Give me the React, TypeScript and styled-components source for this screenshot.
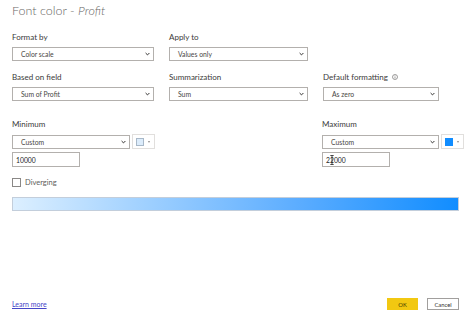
import React from "react";
import styled, { createGlobalStyle } from "styled-components";

const Global = createGlobalStyle`
  html, body { margin: 0; padding: 0; background: #fff; }
  body { font-family: Lato, "Open Sans", sans-serif; color: #252423; }
  * { box-sizing: border-box; }
`;

const Dialog = styled.div`
  width: 474px;
  height: 321px;
  display: flex;
  flex-direction: column;
  padding: 0 12px 11px 12px;
`;

const Title = styled.div`
  margin-top: 3px;
  height: 16px;
  line-height: 16px;
  font-size: 12.5px;
  font-weight: 300;
  color: #6b6967;
  em { font-style: italic; }
`;

const FieldGrid = styled.div`
  margin-top: 13px;
  display: grid;
  grid-template-columns: 142px 139px 116px;
  column-gap: 15px;
  row-gap: 11px;
`;

const Field = styled.div`
  display: flex;
  flex-direction: column;
`;

const Label = styled.div`
  height: 10px;
  line-height: 10px;
  font-size: 8px;
  color: #3b3a39;
  margin-bottom: 5px;
  display: flex;
  align-items: center;
  gap: 4px;
`;

const SelectBox = styled.div<{ $w?: number }>`
  width: ${(p) => (p.$w ? `${p.$w}px` : "100%")};
  height: 14px;
  border: 1px solid #b3b0ad;
  background: #fff;
  display: flex;
  align-items: center;
  justify-content: space-between;
  padding: 0 3px 0 8px;
  font-size: 6.8px;
  color: #484644;
`;

const Chevron = () => (
  <svg width="5" height="4" viewBox="0 0 5 4">
    <path d="M0.6 1 L2.5 2.9 L4.4 1" fill="none" stroke="#323130" strokeWidth="1" />
  </svg>
);

const Select = ({ value, w }: { value: string; w?: number }) => (
  <SelectBox $w={w}>
    <span>{value}</span>
    <Chevron />
  </SelectBox>
);

const InfoIcon = () => (
  <svg width="6" height="6" viewBox="0 0 12 12">
    <circle cx="6" cy="6" r="5" fill="none" stroke="#605e5c" strokeWidth="1.2" />
    <rect x="5.4" y="5" width="1.2" height="4" fill="#605e5c" />
    <rect x="5.4" y="3" width="1.2" height="1.2" fill="#605e5c" />
  </svg>
);

const RangeRow = styled.div`
  margin-top: 18px;
  display: grid;
  grid-template-columns: 310px 142px;
`;

const Control = styled.div`
  display: flex;
  align-items: center;
  gap: 2px;
`;

const SwatchButton = styled.div`
  width: 23px;
  height: 15px;
  border: 1px solid #e1dfdd;
  background: #fff;
  display: flex;
  align-items: center;
  padding-left: 3px;
  gap: 4px;
`;

const Swatch = styled.div<{ $color: string; $border: string }>`
  width: 8px;
  height: 8px;
  background: ${(p) => p.$color};
  border: 1px solid ${(p) => p.$border};
`;

const Caret = styled.span`
  width: 0;
  height: 0;
  border-left: 1.5px solid transparent;
  border-right: 1.5px solid transparent;
  border-top: 2px solid #8a8886;
`;

const InputWrap = styled.div`
  position: relative;
  margin-top: 3px;
  width: 68px;
`;

const TextInput = styled.div`
  width: 68px;
  height: 15px;
  border: 1px solid #b3b0ad;
  padding-left: 3px;
  display: flex;
  align-items: center;
  font-size: 6.8px;
  color: #252423;
`;

const Cursor = styled.svg`
  position: absolute;
  left: 7.5px;
  top: 3px;
`;

const CheckRow = styled.div`
  margin-top: 11px;
  display: flex;
  align-items: center;
  gap: 4px;
  height: 9px;
  font-size: 7.5px;
  color: #605e5c;
`;

const CheckBox = styled.div`
  width: 9px;
  height: 9px;
  border: 1px solid #8a8886;
  background: #fff;
`;

const GradientBar = styled.div`
  margin-top: 10px;
  width: 447px;
  height: 14px;
  border: 1px solid #c3cedb;
  background: linear-gradient(90deg, #dcefff 0%, #9fd0ff 30%, #5aacff 65%, #118dff 100%);
`;

const Footer = styled.div`
  margin-top: auto;
  display: flex;
  align-items: center;
  justify-content: space-between;
  width: 447px;
`;

const Link = styled.a`
  font-size: 7px;
  color: #4646c8;
  text-decoration: underline;
  line-height: 9px;
`;

const Buttons = styled.div`
  display: flex;
  gap: 9px;
`;

const Button = styled.div<{ $primary?: boolean }>`
  width: ${(p) => (p.$primary ? 31 : 32)}px;
  height: 12px;
  display: flex;
  align-items: center;
  justify-content: center;
  font-size: 5.8px;
  color: ${(p) => (p.$primary ? "#4a4000" : "#323130")};
  background: ${(p) => (p.$primary ? "#f2c811" : "#fff")};
  border: 1px solid ${(p) => (p.$primary ? "#f2c811" : "#a19f9d")};
`;

export default function App() {
  return (
    <>
      <Global />
      <Dialog>
        <Title>
          Font color - <em>Profit</em>
        </Title>
        <FieldGrid>
          <Field>
            <Label>Format by</Label>
            <Select value="Color scale" />
          </Field>
          <Field>
            <Label>Apply to</Label>
            <Select value="Values only" />
          </Field>
          <div />
          <Field>
            <Label>Based on field</Label>
            <Select value="Sum of Profit" />
          </Field>
          <Field>
            <Label>Summarization</Label>
            <Select value="Sum" />
          </Field>
          <Field>
            <Label>
              Default formatting <InfoIcon />
            </Label>
            <Select value="As zero" />
          </Field>
        </FieldGrid>
        <RangeRow>
          <Field>
            <Label>Minimum</Label>
            <Control>
              <Select value="Custom" w={118} />
              <SwatchButton>
                <Swatch $color="#dcecfb" $border="#a8b8c8" />
                <Caret />
              </SwatchButton>
            </Control>
            <InputWrap>
              <TextInput>10000</TextInput>
            </InputWrap>
          </Field>
          <Field>
            <Label>Maximum</Label>
            <Control>
              <Select value="Custom" w={117} />
              <SwatchButton>
                <Swatch $color="#118dff" $border="#118dff" />
                <Caret />
              </SwatchButton>
            </Control>
            <InputWrap>
              <TextInput>22000</TextInput>
              <Cursor width="4" height="10" viewBox="0 0 4 10">
                <path d="M0.3 0.5 H3.7 M2 0.5 V9.5 M0.3 9.5 H3.7" stroke="#222" strokeWidth="0.8" fill="none" />
              </Cursor>
            </InputWrap>
          </Field>
        </RangeRow>
        <CheckRow>
          <CheckBox />
          <span>Diverging</span>
        </CheckRow>
        <GradientBar />
        <Footer>
          <Link href="#">Learn more</Link>
          <Buttons>
            <Button $primary>OK</Button>
            <Button>Cancel</Button>
          </Buttons>
        </Footer>
      </Dialog>
    </>
  );
}
